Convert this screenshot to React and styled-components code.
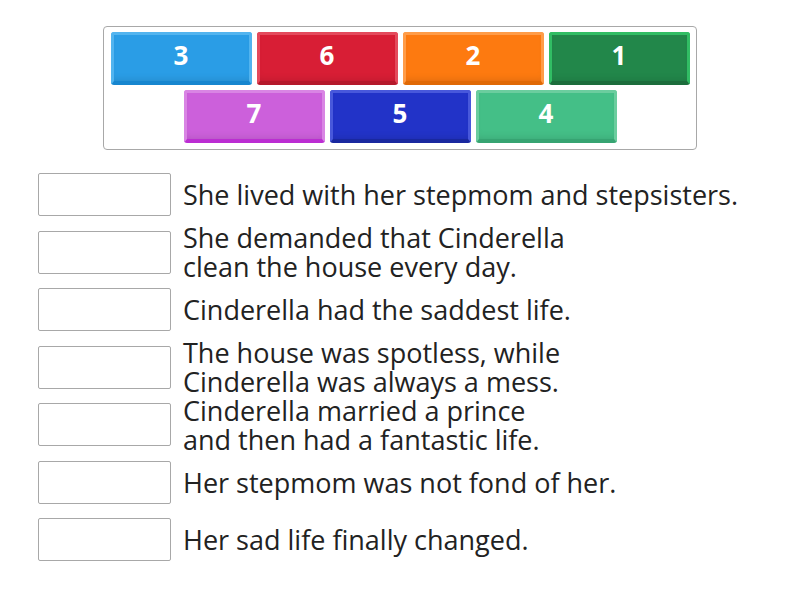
import React from "react";
import styled, { createGlobalStyle } from "styled-components";

const GlobalStyle = createGlobalStyle`
  body {
    margin: 0;
    background: #fff;
    font-family: "Open Sans", "Liberation Sans", sans-serif;
  }
`;

const tilesData = [
  [
    { id: 3, fill: "#2a9de6", light: "#52b4ef", dark: "#1786cf" },
    { id: 6, fill: "#d81e35", light: "#e44a5c", dark: "#b5192b" },
    { id: 2, fill: "#fd7a10", light: "#ff9c48", dark: "#e06905" },
    { id: 1, fill: "#22874a", light: "#31bd64", dark: "#1c6d3c" },
  ],
  [
    { id: 7, fill: "#cc60db", light: "#d985e4", dark: "#bb2dd2" },
    { id: 5, fill: "#2233c8", light: "#4858db", dark: "#19289f" },
    { id: 4, fill: "#44bf87", light: "#6bcd9e", dark: "#36a472" },
  ],
];

const sentences = [
  ["She lived with her stepmom and stepsisters."],
  ["She demanded that Cinderella", "clean the house every day."],
  ["Cinderella had the saddest life."],
  ["The house was spotless, while", "Cinderella was always a mess."],
  ["Cinderella married a prince", "and then had a fantastic life."],
  ["Her stepmom was not fond of her."],
  ["Her sad life finally changed."],
];

const App = () => {
  return (
    <Page>
      <GlobalStyle />
      <TileBank>
        {tilesData.map((row, i) => (
          <TileRow key={i}>
            {row.map((tile) => (
              <Tile
                key={tile.id}
                $fill={tile.fill}
                $light={tile.light}
                $dark={tile.dark}
              >
                {tile.id}
              </Tile>
            ))}
          </TileRow>
        ))}
      </TileBank>
      <SentenceList>
        {sentences.map((lines, i) => (
          <SentenceRow key={i}>
            <DropBox />
            <SentenceText>
              {lines.map((line, j) => (
                <div key={j}>{line}</div>
              ))}
            </SentenceText>
          </SentenceRow>
        ))}
      </SentenceList>
    </Page>
  );
};

export default App;

const Page = styled.div`
  width: 800px;
  height: 600px;
  padding-top: 26px;
  box-sizing: border-box;
`;

const TileBank = styled.div`
  box-sizing: border-box;
  width: 594px;
  margin: 0 auto;
  padding: 5px 0 6px;
  border: 1px solid #a8a8a8;
  border-radius: 4px;
  display: flex;
  flex-direction: column;
  align-items: center;
  gap: 5px;
`;

const TileRow = styled.div`
  display: flex;
  gap: 5px;
`;

const Tile = styled.div`
  box-sizing: border-box;
  width: 141px;
  height: 53px;
  padding-bottom: 6px;
  display: flex;
  align-items: center;
  justify-content: center;
  color: #fff;
  font-size: 26px;
  font-weight: 700;
  border-radius: 3px;
  background: ${({ $fill }) => $fill};
  border: 3px solid ${({ $light }) => $light};
  border-bottom-color: ${({ $dark }) => $dark};
  border-bottom-width: 4px;
  box-shadow: inset 0 -6px 8px -6px rgba(0, 0, 0, 0.15);
`;

const SentenceList = styled.div`
  margin-top: 16px;
  padding-left: 38px;
  display: grid;
  grid-auto-rows: 57.5px;
`;

const SentenceRow = styled.div`
  display: flex;
  align-items: center;
`;

const DropBox = styled.div`
  box-sizing: border-box;
  flex: 0 0 133px;
  height: 43px;
  border: 1px solid #a8a8a8;
  border-radius: 2px;
  background: #fff;
`;

const SentenceText = styled.div`
  margin-left: 12px;
  font-size: 27px;
  line-height: 29px;
  color: #222;
`;
